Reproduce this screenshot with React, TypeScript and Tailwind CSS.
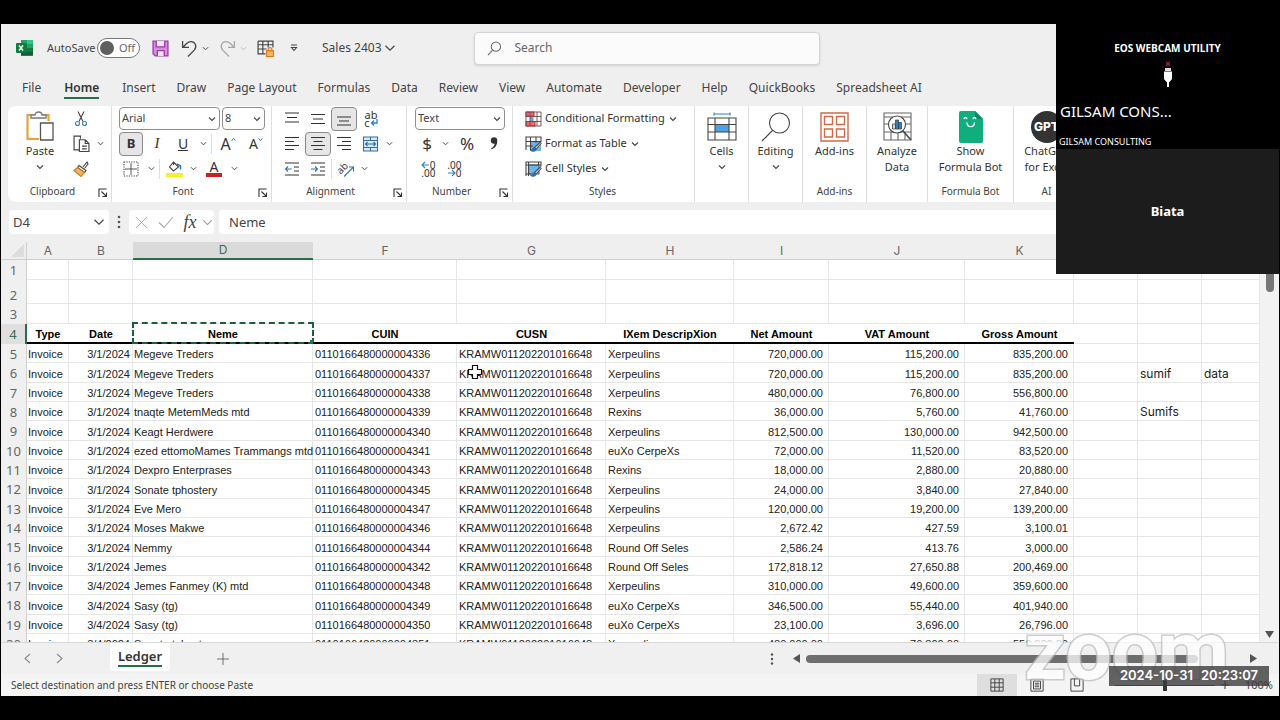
import React from "react";
import type { ReactNode } from "react";

const ink = "#444444";

function Chevron({ size = 8, color = ink }: { size?: number; color?: string }) {
  return (
    <svg width={size} height={size} viewBox="0 0 8 8" fill="none" stroke={color} strokeWidth={size > 9 ? ".8" : "1.1"} aria-hidden="true">
      <path d="M1 2.5 L4 5.5 L7 2.5" />
    </svg>
  );
}

type IconProps = { w?: number; h?: number; box?: string; stroke?: string; sw?: number; children: ReactNode };
function Icon({ w = 16, h = 16, box = "0 0 16 16", stroke = ink, sw = 1.1, children }: IconProps) {
  return (
    <svg width={w} height={h} viewBox={box} fill="none" stroke={stroke} strokeWidth={sw} overflow="visible" aria-hidden="true">
      {children}
    </svg>
  );
}

function Btn({ label, className = "", children }: { label: string; className?: string; children: ReactNode }) {
  return (
    <button type="button" aria-label={label} className={`flex shrink-0 items-center justify-center ${className}`}>
      {children}
    </button>
  );
}

const Divider = () => <span className="h-5 w-px shrink-0 bg-[#dcdcdc]" />;

function Launcher({ label }: { label: string }) {
  return (
    <button type="button" aria-label={label} className="absolute right-[3px] bottom-1">
      <Icon w={10} h={10} box="0 0 10 10" stroke="#333">
        <path d="M1 9 V1 H8.5 M3.5 3.5 L8 8 M8.5 4.5 V8.5 H4.5" />
      </Icon>
    </button>
  );
}

type GroupProps = { name?: string; launcher?: boolean; className: string; labelClass?: string; children: ReactNode };
function Group({ name, launcher, className, labelClass = "", children }: GroupProps) {
  return (
    <section className={`relative flex shrink-0 flex-col border-r border-[#dedede] ${className}`}>
      <div className="h-[76px]">{children}</div>
      <div className={`flex h-[18px] items-center justify-center text-[10px] text-[#444] ${labelClass}`}>{name}</div>
      {launcher && <Launcher label={`${name} settings`} />}
    </section>
  );
}

const Row = ({ className = "", children }: { className?: string; children: ReactNode }) => (
  <div className={`flex h-[25px] items-center ${className}`}>{children}</div>
);

function Pick({ label, value, className }: { label: string; value: string; className: string }) {
  return (
    <div className={`relative ${className}`}>
      <select
        aria-label={label}
        defaultValue={value}
        className="h-[23px] w-full appearance-none rounded border border-[#8f8f8f] bg-white pl-0.5 text-[11px] text-[#444]"
      >
        <option>{value}</option>
      </select>
      <span className="pointer-events-none absolute top-2 right-1">
        <Chevron />
      </span>
    </div>
  );
}

function Lines({ rows, x2 = [15, 15, 15, 15], x1 = [1, 1, 1, 1] }: { rows: number[]; x1?: number[]; x2?: number[] }) {
  return (
    <Icon stroke="#333">
      {rows.map((y, i) => (
        <path key={y} d={`M${x1[i]} ${y} H${x2[i]}`} />
      ))}
    </Icon>
  );
}

function BigButton({ icon, lines, className = "", chevron }: { icon: ReactNode; lines: string[]; className?: string; chevron?: boolean }) {
  return (
    <button type="button" className={`flex w-full flex-col items-center pt-1 text-[11px] leading-4 text-[#333] ${className}`}>
      <span className="flex h-[33px] items-center">{icon}</span>
      {lines.map((l) => (
        <span key={l} className="whitespace-nowrap">{l}</span>
      ))}
      {chevron && <span className="pt-1"><Chevron /></span>}
    </button>
  );
}

function StyleIcon({ kind }: { kind: "cond" | "table" | "cell" }) {
  return (
    <Icon w={17} h={16} box="0 0 17 16">
      {kind === "cond" && (
        <>
          <path d="M1 1 H9 V5 H1 Z M1 10.500 H10 V15 H1 Z" fill="#f4686c" stroke="#c9363c" />
          <path d="M5 5.500 H8.500 V10 H5 Z" fill="#6f9ed8" stroke="none" />
          <path d="M1 1 H16 V15 H1 Z M1 5.500 H16 M1 10.500 H16 M5 1 V15 M12 1 V15" stroke="#6b4a50" strokeWidth=".9" />
        </>
      )}
      {kind === "table" && (
        <>
          <path d="M5 5 H16 V15 H5 Z" fill="#6eb4e8" stroke="none" />
          <path d="M1 14 V1 H16 V6 M1 5.500 H16 M1 10 H8 M5.500 1 V14 M11 1 V7" />
        </>
      )}
      {kind === "cell" && (
        <>
          <path d="M3.500 4 H14 V13 H3.500 Z" fill="#6eb4e8" stroke="#2e75b6" />
          <path d="M1 15 V1 H16 V5 M1 4 H16 M3.500 1 V15 M1 13 H6 M13.500 1 V5" />
        </>
      )}
      {kind !== "cond" && (
        <>
          <path d="M16 5.500 L9.500 11.500 L11 13 L16.500 7" fill="#fff" />
          <path d="M9.500 11.500 C7.500 11.500 8 14 5.500 14.500 C8 16 11 15.500 11 13" fill="#2e75b6" stroke="#1f5f9a" strokeWidth=".8" />
        </>
      )}
    </Icon>
  );
}

function TitleBar() {
  return (
    <header className="flex h-12 shrink-0 items-center pl-[15px] text-[#444]">
      <svg width="17" height="16" viewBox="0 0 17 16" aria-label="Excel">
        <path d="M5 0 H16 a1 1 0 0 1 1 1 V15 a1 1 0 0 1 -1 1 H5 Z" fill="#21a366" />
        <path d="M5 4 H11 V8 H5 Z" fill="#107c41" />
        <path d="M5 8 H17 V12 H5 Z" fill="#107c41" />
        <path d="M5 12 H17 V15.500 H5 Z" fill="#185c37" />
        <path d="M11 0 H16 a1 1 0 0 1 1 1 V4 H11 Z" fill="#33c481" />
        <rect x="0" y="3" width="10" height="10" rx="1" fill="#107c41" />
        <path d="M3 5.500 L7 10.500 M7 5.500 L3 10.500" stroke="#fff" strokeWidth="1.4" />
      </svg>
      <span className="ml-3.5 w-[49px] text-[11px]">AutoSave</span>
      <button type="button" role="switch" aria-checked="false" aria-label="AutoSave" className="ml-px flex h-5 w-[43px] items-center rounded-full border border-[#777] bg-white pl-0.5 text-[11px] text-[#666]">
        <span className="mr-[5px] size-[14px] rounded-full bg-[#5f5f5f]" />
        Off
      </button>
      <Btn label="Save" className="ml-3">
        <Icon w={17} h={17} stroke="#9a3ba8" sw={1.2}>
          <path d="M1 1 H15 V15 H3 L1 13 Z" fill="#d98be0" />
          <path d="M4 1 V6.500 H12 V1" fill="#f3e6f5" />
          <path d="M5 15 V10 H11.500 V15" fill="#f3e6f5" />
        </Icon>
      </Btn>
      <Btn label="Undo" className="ml-3">
        <Icon w={17} h={17} sw={1.2}>
          <path d="M1.500 1 V7 H7.500 M1.800 6.800 L5 3.500 C8 .5 12 1 13.500 4 C14.500 6.500 13.800 8 12.500 9.500 L6.500 15.500" />
        </Icon>
      </Btn>
      <Btn label="Undo history" className="ml-1"><Chevron size={7} /></Btn>
      <Btn label="Redo" className="ml-2.5">
        <Icon w={17} h={17} sw={1.2} stroke="#a8a8a8">
          <path d="M14.500 1 V7 H8.500 M14.200 6.800 L11 3.500 C8 .5 4 1 2.500 4 C1.500 6.500 2.200 8 3.500 9.500 L9.500 15.500" />
        </Icon>
      </Btn>
      <Btn label="Redo history" className="ml-1"><Chevron size={7} color="#b8b8b8" /></Btn>
      <Btn label="Protect sheet" className="ml-2.5">
        <Icon w={17} h={17}>
          <path d="M1 1 H15 V7 M1 1 V13 H8 M1 4.500 H15 M1 8.500 H9 M5.500 1 V13 M10.500 1 V7" />
          <path d="M9 10 H15.500 V15.500 H9 Z" fill="#f6b26b" stroke="#e07b1a" />
          <path d="M10.500 10 V8.500 a1.800 1.800 0 0 1 3.500 0 V10" stroke="#e07b1a" />
        </Icon>
      </Btn>
      <Btn label="Customize toolbar" className="ml-4">
        <Icon w={8} h={8} box="0 0 8 8"><path d="M1 1 H7 M1.500 3.500 H6.500 L4 6.500 Z" /></Icon>
      </Btn>
      <button type="button" className="ml-6 flex items-center gap-0.5 text-[12px]">
        Sales 2403 <Chevron size={12} />
      </button>
      <label className="ml-[78px] flex h-[33px] w-[346px] items-center rounded border border-[#d4d4d4] bg-[#fbfbfb] pl-3 shadow-sm">
        <Icon w={15} h={15} stroke="#666"><circle cx="9.500" cy="6" r="5" /><path d="M6 9.800 L1 15" /></Icon>
        <span className="sr-only">Find</span>
        <input type="text" placeholder="Search" className="ml-[13px] min-w-0 flex-1 bg-transparent text-[12px] outline-none placeholder:text-[#666]" />
      </label>
    </header>
  );
}

const tabs = ["File", "Home", "Insert", "Draw", "Page Layout", "Formulas", "Data", "Review", "View", "Automate", "Developer", "Help", "QuickBooks", "Spreadsheet AI"];

function Tabs() {
  return (
    <nav className="flex h-[34px] shrink-0 gap-[21px] pt-[5px] pl-[21px] text-[12px] whitespace-nowrap text-[#444]">
      {tabs.map((t) => (
        <a
          key={t}
          href={`#${t}`}
          className={t === "Home" ? "mx-0.5 h-[22px] border-b-2 border-[#217346] leading-[22px] font-semibold text-[#333]" : "h-[22px] leading-[22px]"}
        >
          {t}
        </a>
      ))}
    </nav>
  );
}

function Ribbon() {
  return (
    <div className="ml-[7px] flex h-24 shrink-0 overflow-hidden rounded-lg bg-white text-[11px] text-[#333]">
      <Group name="Clipboard" launcher className="w-[104px]" labelClass="pr-3.5">
        <div className="flex">
          <div className="w-[64px]">
            <BigButton
              lines={["Paste"]}
              chevron
              icon={
                <Icon w={30} h={31} box="0 0 30 31" sw={1.3}>
                  <path d="M9 4 H2.500 V28 H14 M18 4 H23.500 V10" stroke="#e8a33d" strokeWidth="2.200" />
                  <path d="M6 7 V4 H10 C10 0 17 0 17 4 H21 V7 Z" fill="#fff" stroke="#777" />
                  <path d="M15.500 12 H28 V29 H15.500 Z" fill="#fff" stroke="#555" />
                </Icon>
              }
            />
          </div>
          <div>
            <Row>
              <Btn label="Cut" className="w-6 pr-1.5">
                <Icon h={17}>
                  <path d="M5 1 L10 11 M11 1 L6 11" />
                  <circle cx="4.500" cy="13" r="2" stroke="#2e82c4" /><circle cx="11.500" cy="13" r="2" stroke="#2e82c4" />
                </Icon>
              </Btn>
            </Row>
            <Row>
              <Btn label="Copy" className="w-6 pr-1.5">
                <Icon w={17} h={17}>
                  <path d="M6 14 H1 V1 H7 V3.500" />
                  <path d="M6 4.500 H11.500 L15 8 V15.500 H6 Z M11.500 4.500 V8 H15 M8.500 10.500 H13 M8.500 13 H13" fill="#fff" />
                </Icon>
              </Btn>
              <Btn label="Copy options" className="w-2"><Chevron size={7} /></Btn>
            </Row>
            <Row>
              <Btn label="Format painter" className="w-6 pr-1.5">
                <Icon>
                  <path d="M10 6 L14 1 L15 3 L11.500 7.500" fill="#fff" />
                  <path d="M6 4.500 L13 9.500 L11.500 11.500 L4.500 6.500 Z" fill="#fff" />
                  <path d="M4.500 6.500 L11.500 11.500 L8 15.500 L1 9.500 Z" fill="#f3b35d" stroke="#c87a1c" />
                </Icon>
              </Btn>
            </Row>
          </div>
        </div>
      </Group>

      <Group name="Font" launcher className="w-40 pl-[7px]" labelClass="pr-6">
        <Row className="gap-0.5">
          <Pick label="Font name" value="Arial" className="w-[101px]" />
          <Pick label="Font size" value="8" className="w-[43px]" />
        </Row>
        <Row>
          <Btn label="Bold" className="h-6 w-6 rounded border border-[#8a8a8a] bg-[#e6e6e6]"><b className="text-[13px]">B</b></Btn>
          <Btn label="Italic" className="w-7"><i className="font-['Liberation_Serif',serif] text-[15px]">I</i></Btn>
          <Btn label="Underline" className="w-6"><span className="text-[14px] underline">U</span></Btn>
          <Btn label="Underline options" className="w-4"><Chevron size={7} /></Btn>
          <Divider />
          <Btn label="Increase font size" className="w-8 text-[16px]">A<span className="mb-2"><Icon w={5} h={5} box="0 0 8 8" stroke="#2e75b6" sw={1.5}><path d="M1 6 L4 2 L7 6" /></Icon></span></Btn>
          <Btn label="Decrease font size" className="w-6 text-[14px]">A<span className="mb-2"><Icon w={5} h={5} box="0 0 8 8" stroke="#2e75b6" sw={1.5}><path d="M1 2 L4 6 L7 2" /></Icon></span></Btn>
        </Row>
        <Row>
          <Btn label="Borders" className="w-6">
            <Icon><path d="M1 1 H15 V15 H1 Z" strokeDasharray="1.2 1.2" /><path d="M8 2 V14 M2 8 H14" strokeWidth=".9" /></Icon>
          </Btn>
          <Btn label="Border options" className="w-4"><Chevron size={7} /></Btn>
          <Divider />
          <Btn label="Fill color" className="w-[28px]">
            <Icon w={17} h={17} box="0 0 17 17">
              <path d="M7.500 2 L12.500 7 L7.500 11 L3.500 7 Z M7.500 2 V5" fill="#fff" />
              <path d="M11 4 L14.500 6 V9.500" stroke="#2e75b6" strokeWidth="1.5" />
              <path d="M0 15 H17" stroke="#f5f02c" strokeWidth="4" />
            </Icon>
          </Btn>
          <Btn label="Fill color options" className="w-2.5"><Chevron size={7} /></Btn>
          <Btn label="Font color" className="w-8">
            <span className="flex w-4 flex-col items-center border-b-4 border-[#cc1f1f] text-[14px] leading-[13px]">A</span>
          </Btn>
          <Btn label="Font color options" className="w-2"><Chevron size={7} /></Btn>
        </Row>
      </Group>

      <Group name="Alignment" launcher className="w-[135px] pl-[7px]" labelClass="pr-6">
        <Row>
          <Btn label="Top align" className="w-[26px]"><Lines rows={[2, 6.5, 11]} x1={[1, 3, 1]} x2={[15, 13, 15]} /></Btn>
          <Btn label="Middle align" className="w-[26px]"><Lines rows={[3.5, 8, 12.5]} x1={[1, 3, 1]} x2={[15, 13, 15]} /></Btn>
          <Btn label="Bottom align" className="h-6 w-[26px] rounded border border-[#8a8a8a] bg-[#e6e6e6]"><Lines rows={[6, 10, 14]} x1={[1, 3, 1]} x2={[15, 13, 15]} /></Btn>
          <Btn label="Wrap text" className="w-[28px]">
            <span className="flex flex-col text-[11px] leading-[8px]">
              <span>ab</span>
              <span className="flex">c<Icon w={8} h={8} box="0 0 8 8" stroke="#2e82c4" sw={1.3}><path d="M7 0 V4 H1.500 M4 1.500 L1.500 4 L4 6.500" /></Icon></span>
            </span>
          </Btn>
        </Row>
        <Row>
          <Btn label="Align left" className="w-[26px]"><Lines rows={[1.5, 5.5, 9.5, 13.5]} x2={[15, 10, 15, 10]} /></Btn>
          <Btn label="Center" className="h-6 w-[26px] rounded border border-[#8a8a8a] bg-[#e6e6e6]"><Lines rows={[1.5, 5.5, 9.5, 13.5]} x1={[1, 3.5, 1, 3.5]} x2={[15, 12.5, 15, 12.5]} /></Btn>
          <Btn label="Align right" className="w-[26px]"><Lines rows={[1.5, 5.5, 9.5, 13.5]} x1={[1, 6, 1, 6]} /></Btn>
          <Btn label="Merge and center" className="w-[26px]">
            <Icon w={17}>
              <path d="M1 1 H15 V15 H1 Z M1 4.500 H15 M1 11.500 H15 M8 1 V4.500 M8 11.500 V15" fill="#d8ebfa" stroke="#3d6d96" />
              <path d="M3 8 H13 M5 6 L3 8 L5 10 M11 6 L13 8 L11 10" stroke="#1f6fb5" />
            </Icon>
          </Btn>
          <Btn label="Merge options" className="w-3"><Chevron size={7} /></Btn>
        </Row>
        <Row>
          <Btn label="Decrease indent" className="w-[26px]">
            <Icon><path d="M1 2 H15 M10 6 H15 M10 10 H15 M1 14 H15" stroke="#333" /><path d="M7.500 8 H1.500 M4 5.500 L1.500 8 L4 10.500" stroke="#2e75b6" /></Icon>
          </Btn>
          <Btn label="Increase indent" className="w-[26px]">
            <Icon><path d="M1 2 H15 M10 6 H15 M10 10 H15 M1 14 H15" stroke="#333" /><path d="M1 8 H7.500 M5 5.500 L7.500 8 L5 10.500" stroke="#2e75b6" /></Icon>
          </Btn>
          <Divider />
          <Btn label="Orientation" className="w-[28px]">
            <Icon w={18} h={18} box="0 0 18 18" stroke="#2e75b6">
              <text x="0" y="12" transform="rotate(-45 5 9)" fontSize="10" fill="#444" stroke="none">ab</text>
              <path d="M7 16.500 L16 7.500 M12 7 H16.500 V11.500" />
            </Icon>
          </Btn>
          <Btn label="Orientation options" className="w-2"><Chevron size={7} /></Btn>
        </Row>
      </Group>

      <Group name="Number" launcher className="w-[106px] pl-2" labelClass="pr-6">
        <Row><Pick label="Number format" value="Text" className="w-[90px]" /></Row>
        <Row>
          <Btn label="Accounting format" className="w-6 text-[17px]">$</Btn>
          <Btn label="Accounting options" className="w-3"><Chevron size={7} /></Btn>
          <Btn label="Percent" className="w-8 text-[17px]">%</Btn>
          <Btn label="Comma style" className="w-[22px]">
            <Icon w={8} h={13} box="0 0 8 13" stroke="none">
              <circle cx="4" cy="3.500" r="3.200" fill="#333" /><path d="M7.200 3.500 C7.500 8 5 11 1.500 12.500 L1 11.500 C3.500 10 5 8 4.500 6 Z" fill="#333" />
            </Icon>
          </Btn>
        </Row>
        <Row>
          <Btn label="Increase decimal" className="w-[26px]">
            <span className="flex flex-col items-end text-[10px] leading-[8px]">
              <span className="flex"><Icon w={9} h={8} box="0 0 9 8" stroke="#2e82c4"><path d="M8 4 H1 M4 1 L1 4 L4 7" /></Icon>0</span>
              <span>.00</span>
            </span>
          </Btn>
          <Btn label="Decrease decimal" className="w-[26px]">
            <span className="flex flex-col items-end text-[10px] leading-[8px]">
              <span>.00</span>
              <span className="flex"><Icon w={9} h={8} box="0 0 9 8" stroke="#2e82c4"><path d="M1 4 H8 M5 1 L8 4 L5 7" /></Icon>0</span>
            </span>
          </Btn>
        </Row>
      </Group>

      <Group name="Styles" className="w-[182px] pl-3" labelClass="pr-3.5">
        {([["cond", "Conditional Formatting"], ["table", "Format as Table"], ["cell", "Cell Styles"]] as const).map(([kind, text]) => (
          <Row key={kind}>
            <button type="button" className="flex items-center whitespace-nowrap">
              <StyleIcon kind={kind} />
              <span className="mr-1 ml-[3px]">{text}</span>
              <Chevron />
            </button>
          </Row>
        ))}
      </Group>

      <Group className="w-[54px]">
        <BigButton
          lines={["Cells"]}
          chevron
          icon={
            <Icon w={30} h={29} box="0 0 30 29">
              <path d="M7 2 H23 M7 .5 V3.500 M23 .5 V3.500" stroke="#2e82c4" />
              <path d="M8 12.500 H22 V20 H8 Z" fill="#4ea3e6" stroke="none" />
              <path d="M1 6 H29 V28 H1 Z M1 12.500 H29 M1 20 H29 M8 6 V28 M22 6 V28" />
            </Icon>
          }
        />
      </Group>
      <Group className="w-[54px]">
        <BigButton lines={["Editing"]} chevron icon={<Icon w={30} h={30} box="0 0 30 30"><circle cx="18.500" cy="11" r="10" /><path d="M11.500 18.500 L1 29" /></Icon>} />
      </Group>
      <Group name="Add-ins" className="w-[64px]">
        <BigButton
          lines={["Add-ins"]}
          icon={<Icon w={29} h={30} box="0 0 29 30" stroke="#cf6a4a" sw={1.4}><path d="M1 1 H28 V29 H1 Z M4.500 4.500 H12.500 V12.500 H4.500 Z M16.500 4.500 H24.500 V12.500 H16.500 Z M4.500 17 H12.500 V25 H4.500 Z M16.500 17 H24.500 V25 H16.500 Z" /></Icon>}
        />
      </Group>
      <Group className="w-[61px]">
        <BigButton
          lines={["Analyze", "Data"]}
          icon={
            <Icon w={29} h={30} box="0 0 29 30">
              <path d="M1 1 H28 V28 H1 Z M1 5 H28 M1 12 H28 M1 20 H28 M8 20 V28 M15 20 V28 M22 20 V28" stroke="#666" />
              <circle cx="14" cy="12.500" r="8.500" fill="#fff" />
              <path d="M20 19 L28 28" strokeWidth="1.5" />
              <path d="M9.500 12 H12.500 V17 H9.500 Z" fill="#c9d7e4" strokeWidth=".8" />
              <path d="M12.500 8 H15.500 V17 H12.500 Z M15.500 10.500 H18.500 V17 H15.500 Z" fill="#2e82c4" strokeWidth=".8" />
            </Icon>
          }
        />
      </Group>
      <Group name="Formula Bot" className="w-[86px]">
        <BigButton
          lines={["Show", "Formula Bot"]}
          icon={
            <Icon w={24} h={32} box="0 0 24 32" stroke="#fff" sw={1.4}>
              <path d="M2 0 H16 L24 8 V30 a2 2 0 0 1 -2 2 H2 a2 2 0 0 1 -2 -2 V2 a2 2 0 0 1 2 -2 Z" fill="#0fae7c" stroke="none" />
              <path d="M16 0 L24 8 H16 Z" fill="#0a8a61" stroke="none" />
              <path d="M5 8 C5.500 6 7.500 6 8 8 M14 8 C14.500 6 16.500 6 17 8 M8 11.500 C8 17 15.500 17 15.500 11.500" />
            </Icon>
          }
        />
      </Group>
      <Group name="AI" className="w-[66px]">
        <BigButton
          lines={["ChatGPT", "for Excel"]}
          icon={<span className="flex size-8 items-center justify-center rounded-full bg-[#333] font-['Inter',sans-serif] text-[12px] font-extrabold text-white">GPT</span>}
        />
      </Group>
    </div>
  );
}

function FormulaBar() {
  return (
    <div className="my-2 ml-2 flex h-6 shrink-0 items-center text-[13px] text-[#444]">
      <label className="relative block w-[100px]">
        <span className="sr-only">Name box</span>
        <input type="text" defaultValue="D4" className="h-6 w-full rounded-sm bg-white pl-1" />
        <span className="pointer-events-none absolute top-1.5 right-1"><Chevron size={12} /></span>
      </label>
      <span className="flex w-5 justify-center"><Icon w={4} h={14} box="0 0 4 14" stroke="none"><g fill="#555"><circle cx="2" cy="2" r="1.300" /><circle cx="2" cy="7" r="1.300" /><circle cx="2" cy="12" r="1.300" /></g></Icon></span>
      <div className="flex h-6 w-[85px] items-center rounded-sm bg-white">
        <Btn label="Cancel" className="w-6"><Icon w={13} h={13} stroke="#a5a5a5"><path d="M1 1 L15 15 M15 1 L1 15" /></Icon></Btn>
        <Btn label="Enter" className="w-[26px]"><Icon stroke="#a5a5a5"><path d="M1 8.500 L6 13.500 L15 3" /></Icon></Btn>
        <Btn label="Insert function" className="w-[22px]"><i className="font-['Liberation_Serif',serif] text-[18px]">fx</i></Btn>
        <Btn label="Function options" className="w-3"><Chevron size={11} color="#999" /></Btn>
      </div>
      <input type="text" aria-label="Formula" defaultValue="Neme" className="ml-[5px] h-6 min-w-0 flex-1 rounded-sm bg-white pl-2.5" />
    </div>
  );
}

const K = "KRAMW011202201016648";
const rows: string[][] = [
  ["3/1/2024", "Megeve Treders", "4336", "Xerpeulins", "720,000.00", "115,200.00", "835,200.00"],
  ["3/1/2024", "Megeve Treders", "4337", "Xerpeulins", "720,000.00", "115,200.00", "835,200.00", "sumif", "data"],
  ["3/1/2024", "Megeve Treders", "4338", "Xerpeulins", "480,000.00", "76,800.00", "556,800.00"],
  ["3/1/2024", "tnaqte MetemMeds mtd", "4339", "Rexins", "36,000.00", "5,760.00", "41,760.00", "Sumifs"],
  ["3/1/2024", "Keagt Herdwere", "4340", "Xerpeulins", "812,500.00", "130,000.00", "942,500.00"],
  ["3/1/2024", "ezed ettomoMames Trammangs mtd", "4341", "euXo CerpeXs", "72,000.00", "11,520.00", "83,520.00"],
  ["3/1/2024", "Dexpro Enterprases", "4343", "Rexins", "18,000.00", "2,880.00", "20,880.00"],
  ["3/1/2024", "Sonate tphostery", "4345", "Xerpeulins", "24,000.00", "3,840.00", "27,840.00"],
  ["3/1/2024", "Eve Mero", "4347", "Xerpeulins", "120,000.00", "19,200.00", "139,200.00"],
  ["3/1/2024", "Moses Makwe", "4346", "Xerpeulins", "2,672.42", "427.59", "3,100.01"],
  ["3/1/2024", "Nemmy", "4344", "Round Off Seles", "2,586.24", "413.76", "3,000.00"],
  ["3/1/2024", "Jemes", "4342", "Round Off Seles", "172,818.12", "27,650.88", "200,469.00"],
  ["3/4/2024", "Jemes Fanmey (K) mtd", "4348", "Xerpeulins", "310,000.00", "49,600.00", "359,600.00"],
  ["3/4/2024", "Sasy (tg)", "4349", "euXo CerpeXs", "346,500.00", "55,440.00", "401,940.00"],
  ["3/4/2024", "Sasy (tg)", "4350", "euXo CerpeXs", "23,100.00", "3,696.00", "26,796.00"],
  ["3/4/2024", "Sonate tphostery", "4351", "Xerpeulins", "480,000.00", "76,800.00", "556,800.00"],
];
const letters = ["A", "B", "D", "F", "G", "H", "I", "J", "K", "", "", ""];
const titles = ["Type", "Date", "Neme", "CUIN", "CUSN", "IXem DescripXion", "Net Amount", "VAT Amount", "Gross Amount"];
const cell = "border-r border-b border-[#e6e6e6] p-0 whitespace-nowrap";
const rowNo = "border-r border-[#cfcfcf] bg-[#f0f0f0] p-0 text-center font-['Noto_Sans',sans-serif] text-[13px] leading-[18px] font-normal text-[#666]";

function Sheet() {
  return (
    <div className="flex min-h-0 flex-1">
      <div className="min-w-0 flex-1 overflow-hidden bg-white">
        <table className="w-full table-fixed border-separate border-spacing-0 font-['Liberation_Sans',Arial,sans-serif] text-[11px] leading-[16px] text-[#222]">
          <colgroup>
            <col className="w-[26px]" /><col className="w-[42px]" /><col className="w-[64px]" /><col className="w-[180px]" />
            <col className="w-[144px]" /><col className="w-[149px]" /><col className="w-[128px]" /><col className="w-[95px]" />
            <col className="w-[136px]" /><col className="w-[109px]" /><col className="w-16" /><col className="w-16" /><col />
          </colgroup>
          <thead>
            <tr className="h-[18px]">
              <th className="border-r border-b border-[#cfcfcf] bg-[#efefef] p-0">
                <svg className="mr-0.5 ml-auto" width="13" height="13" viewBox="0 0 13 13" aria-label="Select all"><path d="M13 0 V13 H0 Z" fill="#dcdcdc" /></svg>
              </th>
              {letters.map((l, i) => (
                <th
                  key={i}
                  scope="col"
                  className={`p-0 font-['Inter','Noto_Sans',sans-serif] text-[12px] leading-[16px] font-normal ${l === "D" ? "border-b-2 border-[#217346] bg-[#dadada] text-[#3f6b55]" : "border-b border-[#cfcfcf] bg-[#efefef] text-[#666]"}`}
                >
                  {l}
                </th>
              ))}
            </tr>
          </thead>
          <tbody>
            {[1, 2, 3].map((n) => (
              <tr key={n} className={n === 2 ? "h-6" : "h-5"}>
                <th scope="row" className={`${rowNo} ${n === 2 ? "align-bottom" : ""}`}>{n}</th>
                {letters.map((_, i) => <td key={i} className={cell} />)}
              </tr>
            ))}
            <tr className="h-5">
              <th scope="row" className="border-r-2 border-[#217346] bg-[#dfdfdf] p-0 text-center font-['Noto_Sans',sans-serif] text-[13px] leading-[18px] font-normal text-[#3f6b55]">4</th>
              {titles.map((t) => (
                <th key={t} scope="col" className="relative border-b-2 border-black p-0 pt-0.5 font-bold whitespace-nowrap text-black">
                  {t}
                  {t === "Neme" && (
                    <span className="absolute -inset-x-px -top-0.5 -bottom-0.5 border-2 border-dashed border-[#1d5e3c]">
                      <span className="absolute -right-0.5 -bottom-0.5 size-1 bg-[#217346]" />
                    </span>
                  )}
                </th>
              ))}
              <td className={cell} /><td className={cell} /><td className={cell} />
            </tr>
            {rows.map(([date, name, no, desc, net, vat, gross, m = "", n = ""], i) => (
              <tr key={no} className="h-[19px] nth-[3n]:h-5">
                <th scope="row" className={rowNo}>{i + 5}</th>
                <td className={`${cell} pt-0.5 pl-px`}>Invoice</td>
                <td className={`${cell} pt-0.5 pr-0.5 text-right`}>{date}</td>
                <td className={`${cell} pt-0.5 pl-px`}>{name}</td>
                <td className={`${cell} pt-0.5 pl-0.5`}>011016648000000{no}</td>
                <td className={`${cell} pt-0.5 pl-0.5`}>{K}</td>
                <td className={`${cell} pt-0.5 pl-0.5`}>{desc}</td>
                <td className={`${cell} pt-0.5 pr-[5px] text-right`}>{net}</td>
                <td className={`${cell} pt-0.5 pr-[5px] text-right`}>{vat}</td>
                <td className={`${cell} pt-0.5 pr-[5px] text-right`}>{gross}</td>
                <td className={cell} />
                <td className={`${cell} pt-0.5 pl-0.5 font-['Inter',sans-serif] text-[12px]`}>{m}</td>
                <td className={`${cell} pt-0.5 pl-0.5 font-['Inter',sans-serif] text-[12px]`}>{n}</td>
              </tr>
            ))}
          </tbody>
        </table>
      </div>
      <div className="flex w-[19px] shrink-0 flex-col items-center justify-between bg-[#f2f2f2]">
        <span className="h-[50px] w-2 rounded-full bg-[#777]" />
        <Btn label="Scroll down" className="mb-1"><svg width="9" height="7" viewBox="0 0 9 7" aria-hidden="true"><path d="M0 0 H9 L4.500 7 Z" fill="#555" /></svg></Btn>
      </div>
    </div>
  );
}

function Footer() {
  return (
    <footer className="shrink-0 text-[#444]">
      <div className="flex h-8 items-center border-t border-[#d8d8d8] bg-[#f0f0f0] pr-[22px]">
        <Btn label="Previous sheet" className="ml-5 w-3"><Icon w={7} h={11} box="0 0 7 11" stroke="#888"><path d="M6 1 L1 5.500 L6 10" /></Icon></Btn>
        <Btn label="Next sheet" className="ml-5 w-3"><Icon w={7} h={11} box="0 0 7 11" stroke="#888"><path d="M1 1 L6 5.500 L1 10" /></Icon></Btn>
        <button type="button" className="mb-1 ml-[45px] h-7 w-[60px] rounded-b bg-white text-[13px] font-semibold text-[#333]">
          <span className="border-b-2 border-[#217346]">Ledger</span>
        </button>
        <Btn label="Add sheet" className="ml-[45px] w-4"><Icon w={12} h={12} stroke="#555"><path d="M8 0 V16 M0 8 H16" /></Icon></Btn>
        <span className="flex-1" />
        <Icon w={4} h={12} box="0 0 4 12" stroke="none"><g fill="#555"><circle cx="2" cy="1.500" r="1.200" /><circle cx="2" cy="6" r="1.200" /><circle cx="2" cy="10.500" r="1.200" /></g></Icon>
        <Btn label="Scroll left" className="ml-[19px]"><svg width="7" height="9" viewBox="0 0 7 9" aria-hidden="true"><path d="M7 0 V9 L0 4.500 Z" fill="#555" /></svg></Btn>
        <span className="ml-1.5 h-2 w-[392px] rounded-full bg-[#6e6e6e]" />
        <Btn label="Scroll right" className="ml-[52px]"><svg width="7" height="9" viewBox="0 0 7 9" aria-hidden="true"><path d="M0 0 V9 L7 4.500 Z" fill="#555" /></svg></Btn>
      </div>
      <div className="flex h-[22px] items-center bg-[#f4f4f4] pr-1.5 pl-2.5 text-[10px]">
        <span>Select destination and press ENTER or choose Paste</span>
        <span className="flex-1" />
        <Btn label="Normal view" className="h-[22px] w-10 bg-[#dedede]"><Icon w={14} h={14}><path d="M1 1 H15 V15 H1 Z M1 5.500 H15 M1 10.500 H15 M5.500 1 V15 M10.500 1 V15" /></Icon></Btn>
        <Btn label="Page layout view" className="w-10"><Icon w={14} h={14}><path d="M1 1 H15 V15 H1 Z M4 3.500 H12 V12.500 H4 Z M5.500 6 H10.500 M5.500 8 H10.500 M5.500 10 H10.500" /></Icon></Btn>
        <Btn label="Page break view" className="w-10"><Icon w={14} h={14}><path d="M1 1 H15 V15 H1 Z M5 1 V9 H11 V1" /></Icon></Btn>
        <input
          type="range"
          aria-label="Zoom level"
          className="ml-[18px] h-px w-[100px] appearance-none bg-[#555] [&::-webkit-slider-thumb]:h-3 [&::-webkit-slider-thumb]:w-1 [&::-webkit-slider-thumb]:appearance-none [&::-webkit-slider-thumb]:bg-[#333]"
        />
        <button type="button" aria-label="Zoom in" className="mr-4 ml-1.5"><Icon w={8} h={8} box="0 0 8 8"><path d="M4 0 V8 M0 4 H8" /></Icon></button>
        <span className="text-[11px]">100%</span>
      </div>
    </footer>
  );
}

function Participants() {
  return (
    <aside className="absolute top-0 right-px flex w-[223px] flex-col text-white">
      <div className="flex h-[149px] flex-col bg-black">
        <p className="pt-[41px] text-center font-['Open_Sans',sans-serif] text-[10px] leading-[14px] font-bold">EOS WEBCAM UTILITY</p>
        <svg className="mx-auto mt-1.5" width="12" height="27" viewBox="0 0 12 27" aria-label="Camera unplugged">
          <path d="M4 1 L8 5 M8 1 L4 5" stroke="#b3204a" strokeWidth="1.200" />
          <path d="M3 7 H9 V10 H3 Z" fill="#ddd" />
          <path d="M2 10.500 H10 V18 L7.500 21 H7 V26 H5 V21 H4.500 L2 18 Z" fill="#fff" />
        </svg>
        <p className="mt-3 pl-1 text-[15px] leading-[22px]">GILSAM CONS...</p>
        <p className="mt-[13px] pl-[3px] text-[9px] leading-[14px]">GILSAM CONSULTING</p>
      </div>
      <div className="flex h-[125px] items-center justify-center bg-[#1c1c1c] text-[13px] font-bold">Biata</div>
    </aside>
  );
}

export default function App() {
  return (
    <div className="relative flex h-screen flex-col overflow-hidden bg-black px-px py-6 font-['Noto_Sans',sans-serif]">
      <main className="flex min-h-0 flex-1 flex-col bg-[#efefef]">
        <TitleBar />
        <Tabs />
        <Ribbon />
        <FormulaBar />
        <Sheet />
        <Footer />
      </main>
      <Participants />
      <svg className="absolute top-[364px] left-[467px]" width="16" height="16" viewBox="0 0 16 16" aria-hidden="true">
        <path d="M5.500 1.500 H10.500 V5.500 H14.500 V10.500 H10.500 V14.500 H5.500 V10.500 H1.500 V5.500 H5.500 Z" fill="#fff" stroke="#111" strokeWidth="1.200" />
      </svg>
      <span className="pointer-events-none absolute right-[51px] bottom-[37px] font-['Roboto',sans-serif] text-[82px] leading-[64px] font-bold text-white opacity-75 [-webkit-text-stroke:3px_#bdbdbd] [paint-order:stroke_fill]">zoom</span>
      <time className="absolute right-[11px] bottom-[34px] flex h-5 w-[160px] items-center justify-center gap-2 bg-[#3c3c3c]/80 font-['Inter',sans-serif] text-[13px] font-semibold text-white">
        <span>2024-10-31</span>
        <span>20:23:07</span>
      </time>
    </div>
  );
}
